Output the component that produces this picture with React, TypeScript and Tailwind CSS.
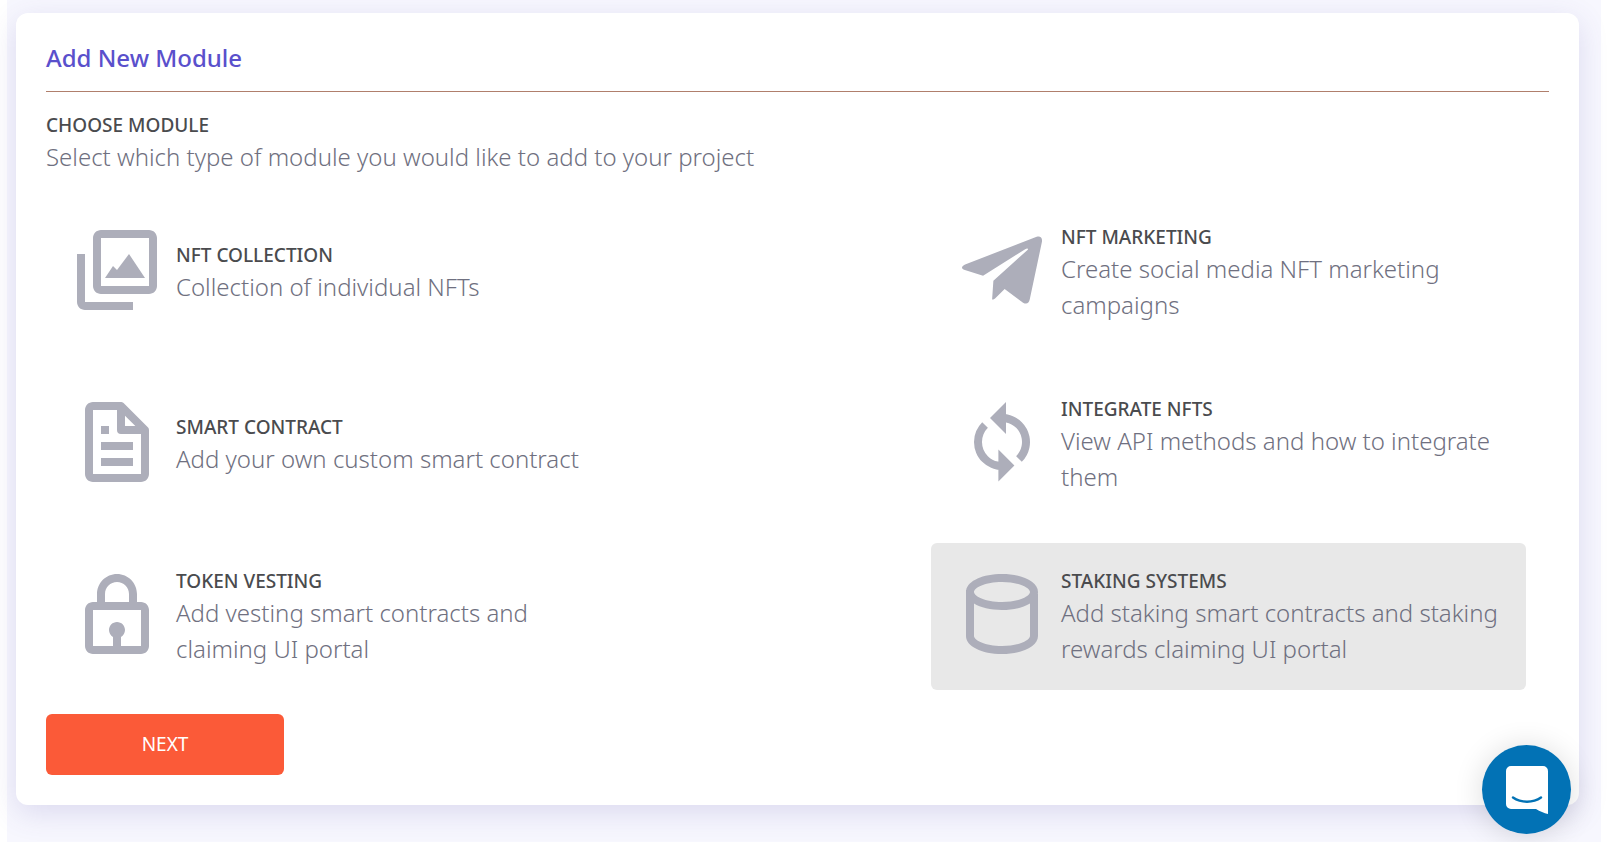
import { useState } from "react";
import {
  BiCylinder,
  BiFile,
  BiImages,
  BiLock,
  BiLogoTelegram,
  BiSync,
} from "react-icons/bi";

const modules = [
  {
    id: "collection",
    name: "NFT COLLECTION",
    description: "Collection of individual NFTs",
    icon: BiImages,
  },
  {
    id: "marketing",
    name: "NFT MARKETING",
    description: "Create social media NFT marketing campaigns",
    icon: BiLogoTelegram,
  },
  {
    id: "contract",
    name: "SMART CONTRACT",
    description: "Add your own custom smart contract",
    icon: BiFile,
  },
  {
    id: "integrate",
    name: "INTEGRATE NFTS",
    description: "View API methods and how to integrate them",
    icon: BiSync,
  },
  {
    id: "vesting",
    name: "TOKEN VESTING",
    description: "Add vesting smart contracts and claiming UI portal",
    icon: BiLock,
  },
  {
    id: "staking",
    name: "STAKING SYSTEMS",
    description: "Add staking smart contracts and staking rewards claiming UI portal",
    icon: BiCylinder,
  },
];

export default function App() {
  const [selected, setSelected] = useState("staking");

  return (
    <div className="min-h-screen bg-white px-[7px] font-['Noto_Sans','Open_Sans',sans-serif]">
      <main className="min-h-screen bg-[#f7f7fe] pt-[13px] pr-[22px] pl-[9px]">
        <section className="rounded-xl bg-white px-[30px] pt-[27px] pb-[30px] shadow-[0_8px_30px_rgba(80,70,160,0.16)]">
          <h1 className="border-b border-[#b07f6c] pb-[15px] text-2xl leading-9 font-medium text-[#5a50cc]">
            Add New Module
          </h1>

          <h2 className="mt-[19px] text-[19px] leading-7 font-medium text-[#4a4b4e]">
            CHOOSE MODULE
          </h2>
          <p className="text-2xl leading-9 font-light text-[#6f7080]">
            Select which type of module you would like to add to your project
          </p>

          {/* Module list */}
          <div className="mt-6 grid grid-cols-[minmax(0,595px)_minmax(0,595px)] justify-between gap-y-[25px] pr-[23px]">
            {modules.map(({ id, name, description, icon: Icon }) => (
              <button
                key={id}
                type="button"
                aria-pressed={selected === id}
                onClick={() => setSelected(id)}
                className={`flex h-[147px] cursor-pointer items-center rounded-md px-[23px] text-left ${
                  selected === id ? "bg-[#e8e8e8]" : "bg-white"
                }`}
              >
                <Icon size={96} className="mt-[23px] shrink-0 self-start text-[#adaeba]" />
                <span className="ml-[11px] block">
                  <span className="block text-[19px] leading-7 font-medium text-[#4a4b4e]">
                    {name}
                  </span>
                  <span className="block text-2xl leading-9 font-light text-[#6f7080]">
                    {description}
                  </span>
                </span>
              </button>
            ))}
          </div>

          <button
            type="button"
            className="mt-6 h-[61px] w-[238px] cursor-pointer rounded-md bg-[#fb5a38] text-[19px] text-white"
          >
            NEXT
          </button>
        </section>
      </main>

      {/* Chat launcher */}
      <button
        type="button"
        aria-label="Open chat"
        className="fixed right-[37px] bottom-[8px] flex size-[89px] cursor-pointer items-center justify-center rounded-full bg-[#0272b5] shadow-[0_2px_30px_rgba(0,0,0,0.14)]"
      >
        <svg viewBox="0 0 42 48" className="h-12 w-[42px]">
          <path
            d="M5 0h32a5 5 0 0 1 5 5v43c-4-1-8-2.500-12-5H5a5 5 0 0 1-5-5V5a5 5 0 0 1 5-5z"
            fill="#fff"
          />
          <path
            d="M7 31.500c8 5.500 20 5.500 28 0"
            fill="none"
            stroke="#0272b5"
            strokeWidth="2.5"
            strokeLinecap="round"
          />
        </svg>
      </button>
    </div>
  );
}
